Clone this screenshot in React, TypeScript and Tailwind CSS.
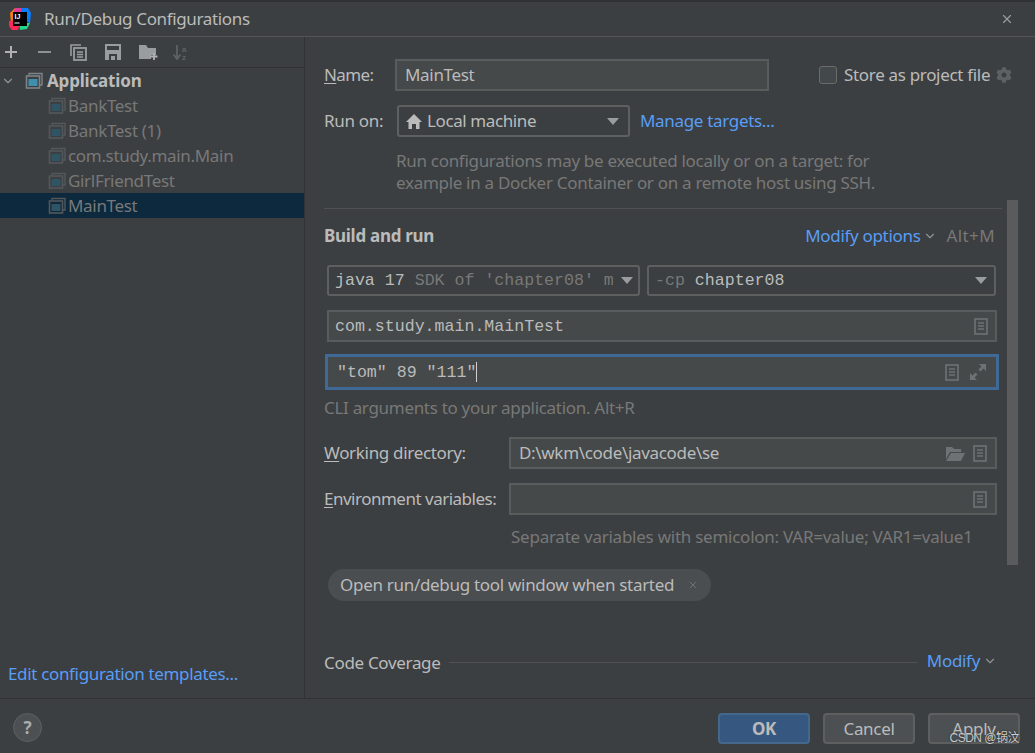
import { ChevronDown, X } from "lucide-react";
import { FaCog } from "react-icons/fa";

const sans = "font-['Noto_Sans','Open_Sans',sans-serif]";
const mono = "font-['Liberation_Mono','DejaVu_Sans_Mono',monospace]";

const configs = ["BankTest", "BankTest (1)", "com.study.main.Main", "GirlFriendTest", "MainTest"];

function AppIcon({ dim = false }: { dim?: boolean }) {
  const line = dim ? "#54585a" : "#7d8487";
  const fill = dim ? "#2f5564" : "#3f8fae";
  return (
    <svg width="18" height="18" viewBox="0 0 18 18" className="shrink-0">
      <path d="M4 3V1.500h13V13h-2" fill="none" stroke={line} strokeWidth="1.400" />
      <rect x="1.500" y="4" width="13" height="12" fill="none" stroke={line} strokeWidth="1.600" />
      <rect x="3.500" y="7" width="9" height="7" fill={fill} />
    </svg>
  );
}

function Logo() {
  return (
    <svg width="22" height="22" viewBox="0 0 22 22" className="shrink-0">
      <path d="M1 5 6 0h9l-3 11-10 4Z" fill="#f97a12" />
      <path d="M6 0h7l-2 6H4Z" fill="#e0399a" />
      <path d="M0 13 12 11 9 22H3L0 18Z" fill="#fe2857" />
      <path d="M12 0h7l3 5-1 10-9-4Z" fill="#087cfa" />
      <path d="M10 15h11l-3 6-7 1Z" fill="#21d789" />
      <rect x="4" y="4" width="14" height="14" fill="#000" />
      <text x="5.500" y="11" fill="#fff" fontSize="7" fontWeight="700" fontFamily="Liberation Sans">IJ</text>
      <rect x="5.500" y="14.500" width="5" height="1" fill="#fff" />
    </svg>
  );
}

function DocIcon() {
  return (
    <svg width="14" height="17" viewBox="0 0 14 17" className="shrink-0">
      <rect x="1" y="1" width="12" height="15" fill="none" stroke="#6e7274" strokeWidth="1.600" />
      <path d="M4 5h6M4 8h6M4 11h6" stroke="#6e7274" strokeWidth="1.400" />
    </svg>
  );
}

function Caret() {
  return (
    <svg width="12" height="7" viewBox="0 0 12 7" className="shrink-0">
      <path d="M0 0h12L6 7Z" fill="#9a9d9f" />
    </svg>
  );
}

function Toolbar() {
  return (
    <div className="h-[31px] flex items-center border-b border-[#323232]">
      <svg width="16" height="16" viewBox="0 0 16 16" className="ml-[3px]">
        <path d="M8 2v12M2 8h12" stroke="#afb1b3" strokeWidth="2" />
      </svg>
      <svg width="14" height="16" viewBox="0 0 14 16" className="ml-[19px]">
        <path d="M0 8h13" stroke="#8f9294" strokeWidth="2" />
      </svg>
      <svg width="17" height="17" viewBox="0 0 17 17" className="ml-[18px]">
        <path d="M1 12V1h10" fill="none" stroke="#9a9d9f" strokeWidth="1.600" />
        <rect x="4" y="4" width="12" height="12" fill="none" stroke="#9a9d9f" strokeWidth="1.800" />
        <path d="M7 8h6M7 10.500h6M7 13h6" stroke="#9a9d9f" strokeWidth="1.300" />
      </svg>
      <svg width="16" height="16" viewBox="0 0 16 16" className="ml-[18px]">
        <path d="M0 0h16v16H0Z" fill="#9a9d9f" />
        <rect x="2" y="2" width="12" height="4" fill="#3c3f41" />
        <rect x="4" y="10" width="8" height="6" fill="#3c3f41" />
        <rect x="6" y="12" width="4" height="4" fill="#9a9d9f" />
      </svg>
      <svg width="19" height="17" viewBox="0 0 19 17" className="ml-[18px]">
        <path d="M0 1h7l2 3h8v7h-5v4H0Z" fill="#9a9d9f" />
        <path d="M15 9v7M11.500 12.500h7" stroke="#afb1b3" strokeWidth="1.800" />
      </svg>
      <svg width="17" height="17" viewBox="0 0 17 17" className="ml-[14px]">
        <path d="M5 1v13M1.500 10.500 5 15l3.500-4.500" fill="none" stroke="#5e6163" strokeWidth="1.800" />
        <text x="10" y="7.500" fontSize="8" fontWeight="700" fill="#5e6163" fontFamily="Liberation Sans">a</text>
        <text x="10" y="16" fontSize="8" fontWeight="700" fill="#5e6163" fontFamily="Liberation Sans">z</text>
      </svg>
    </div>
  );
}

function Sidebar() {
  return (
    <div className="w-[305px] shrink-0 flex flex-col border-r border-[#323232]">
      <Toolbar />
      <div className="h-[25px] flex items-center">
        <ChevronDown size={14} className="ml-[1px] text-[#8f9294]" />
        <span className="ml-[10px]"><AppIcon /></span>
        <span className="ml-[4px] text-[17px] font-bold text-[#bbbbbb] tracking-[-0.18px]">Application</span>
      </div>
      {configs.map((name) => (
        <div key={name} className={`h-[25px] flex items-center pl-[48px] ${name === "MainTest" ? "bg-[#0d293e]" : ""}`}>
          <AppIcon dim />
          <span className="ml-[2px] text-[17px] text-[#787878] tracking-[-0.32px]">{name}</span>
        </div>
      ))}
      <div className="mt-auto pb-[13px] pl-[8px] text-[17px] text-[#589df6] tracking-[-0.34px] leading-[22px]">
        Edit configuration templates...
      </div>
    </div>
  );
}

function Label({ first, rest, width, spacing = "tracking-[-0.32px]" }: { first: string; rest: string; width: string; spacing?: string }) {
  return (
    <span className={`${width} shrink-0 text-[17px] text-[#bbbbbb] ${spacing}`}>
      <span className="underline underline-offset-2">{first}</span>
      {rest}
    </span>
  );
}

function Form() {
  return (
    <div className="flex-1 min-w-0 pl-[19px] pr-[33px] pt-[22px] flex flex-col relative">
      <div className="h-[32px] flex items-center">
        <Label first="N" rest="ame:" width="w-[71px]" spacing="tracking-[-0.6px]" />
        <div className="w-[374px] shrink-0 h-[32px] flex items-center px-[8px] bg-[#45494a] border-2 border-[#585c5d] text-[17px] text-[#bbbbbb] tracking-[-0.32px]">
          MainTest
        </div>
        <div className="ml-[50px] flex items-center shrink-0">
          <span className="w-[18px] h-[18px] rounded-[3px] border border-[#6b6b6b] bg-[#43494a]" />
          <span className="ml-[7px] text-[17px] text-[#bbbbbb] tracking-[-0.32px] whitespace-nowrap">Store as project file</span>
          <FaCog size={16} className="ml-[6px] text-[#5e6163]" />
        </div>
      </div>
      <div className="mt-[14px] h-[32px] flex items-center">
        <span className="w-[73px] shrink-0 text-[17px] text-[#bbbbbb] tracking-[-0.32px]">Run on:</span>
        <div className="w-[233px] shrink-0 h-[32px] flex items-center pl-[7px] pr-[9px] rounded-[3px] border-2 border-[#5e6060] text-[#bbbbbb]">
          <svg width="16" height="15" viewBox="0 0 16 15" className="shrink-0">
            <path d="M8 0 16 8h-2.500v7H10v-5H6v5H2.500V8H0Z" fill="#bbbbbb" />
          </svg>
          <span className="ml-[5px] text-[17px] tracking-[-0.4px]">Local machine</span>
          <span className="ml-auto"><Caret /></span>
        </div>
        <span className="ml-[10px] text-[17px] text-[#589df6] tracking-[-0.32px] whitespace-nowrap">Manage targets...</span>
      </div>
      <p className="mt-[13px] ml-[72px] text-[17px] leading-[22px] text-[#787878] tracking-[-0.3px] whitespace-nowrap">
        Run configurations may be executed locally or on a target: for
        <br />
        example in a Docker Container or on a remote host using SSH.
      </p>
      <div className="mt-[14px] h-px bg-[#515151]" />
      <div className="mt-[15px] mr-[7px] h-[24px] flex items-center">
        <span className="text-[17px] font-bold text-[#bbbbbb] tracking-[-0.28px]">Build and run</span>
        <span className="ml-auto text-[17px] text-[#589df6] tracking-[-0.32px]">Modify options</span>
        <ChevronDown size={14} className="ml-[3px] text-[#8f9294]" />
        <span className="ml-[9px] text-[17px] text-[#787878] tracking-[0.4px]">Alt+M</span>
      </div>
      <div className={`mt-[17px] ml-[3px] mr-[6px] h-[31px] flex gap-[7px] ${mono} text-[16.600px]`}>
        <div className="w-[313px] flex items-center pl-[6px] pr-[5px] rounded-[3px] border-2 border-[#5e6060] overflow-hidden">
          <span className="text-[#bbbbbb] whitespace-pre pt-[2px]">java 17 </span>
          <span className="text-[#787878] whitespace-pre w-[198px] overflow-hidden pt-[2px]">SDK of 'chapter08' m</span>
          <span className="ml-auto"><Caret /></span>
        </div>
        <div className="flex-1 flex items-center pl-[6px] pr-[7px] rounded-[3px] border-2 border-[#5e6060]">
          <span className="text-[#787878] whitespace-pre pt-[2px]">-cp </span>
          <span className="text-[#bbbbbb] pt-[2px]">chapter08</span>
          <span className="ml-auto"><Caret /></span>
        </div>
      </div>
      <div className={`mt-[14px] ml-[3px] mr-[5px] h-[32px] flex items-center pl-[6px] pr-[7px] bg-[#45494a] border-2 border-[#585c5d] ${mono} text-[16.600px] text-[#bbbbbb]`}>
        <span className="pt-[2px]">com.study.main.MainTest</span>
        <span className="ml-auto"><DocIcon /></span>
      </div>
      <div className={`mt-[12px] ml-px mr-[3px] h-[36px] flex items-center pl-[9px] pr-[9px] bg-[#45494a] border-[3px] border-[#3f6a96] ${mono} text-[16.600px] text-[#bbbbbb]`}>
        <span className="pt-[2px]">"tom" 89 "111"</span>
        <span className="w-px h-[20px] bg-[#d0d0d0]" />
        <span className="ml-auto"><DocIcon /></span>
        <svg width="18" height="18" viewBox="0 0 18 18" className="ml-[10px] shrink-0">
          <path d="M10 1h7v7l-2.500-2.500-3 3-2-2 3-3ZM8 17H1v-7l2.500 2.500 3-3 2 2-3 3Z" fill="#6e7274" />
        </svg>
      </div>
      <p className="mt-[7px] text-[17px] leading-[22px] text-[#787878] tracking-[-0.3px]">CLI arguments to your application. Alt+R</p>
      <div className="mt-[18px] h-[32px] flex items-center">
        <Label first="W" rest="orking directory:" width="w-[185px]" />
        <div className="w-[488px] shrink-0 h-[32px] flex items-center pl-[8px] pr-[8px] bg-[#45494a] border-2 border-[#585c5d] text-[17px] text-[#bbbbbb] tracking-[-0.32px]">
          D:\wkm\code\javacode\se
          <svg width="19" height="15" viewBox="0 0 19 15" className="ml-auto shrink-0">
            <path d="M0 1h6l2 2h7v3H4L0 13Z M5 7h14l-4 8H0Z" fill="#6e7274" />
          </svg>
          <span className="ml-[8px]"><DocIcon /></span>
        </div>
      </div>
      <div className="mt-[14px] h-[32px] flex items-center">
        <Label first="E" rest="nvironment variables:" width="w-[185px]" spacing="tracking-[-0.5px]" />
        <div className="w-[488px] shrink-0 h-[32px] flex items-center pl-[8px] pr-[8px] bg-[#45494a] border-2 border-[#585c5d]">
          <span className="ml-auto"><DocIcon /></span>
        </div>
      </div>
      <p className="mt-[11px] ml-[187px] text-[17px] leading-[22px] text-[#787878] tracking-[-0.25px] whitespace-nowrap">
        Separate variables with semicolon: VAR=value; VAR1=value1
      </p>
      <div className="mt-[21px] ml-[4px] w-[383px] h-[32px] rounded-full bg-[#4a4e50] flex items-center pl-[12px] text-[17px] text-[#bbbbbb] tracking-[-0.3px] whitespace-nowrap">
        Open run/debug tool window when started
        <X size={12} className="ml-[13px] text-[#6e7274]" />
      </div>
      <div className="mt-[50px] mr-[5px] h-[24px] flex items-center">
        <span className="text-[17px] text-[#bbbbbb] tracking-[-0.32px]">Code Coverage</span>
        <span className="ml-[8px] flex-1 h-px bg-[#515151] mb-[2px]" />
        <span className="ml-[9px] mb-[4px] text-[17px] text-[#589df6] tracking-[-0.32px]">Modify</span>
        <ChevronDown size={14} className="ml-[3px] mb-[4px] text-[#8f9294]" />
      </div>
      <div className="absolute left-[702px] top-[163px] w-[11px] h-[365px] bg-[#595b5d]" />
    </div>
  );
}

function Footer() {
  const btn = "w-[92px] h-[31px] rounded-[4px] flex items-center justify-center text-[17px] tracking-[-0.3px]";
  return (
    <div className="h-[55px] shrink-0 border-t border-[#323232] flex items-start pt-[14px] pl-[13px] pr-[15px] relative">
      <span className="w-[29px] h-[29px] rounded-full bg-[#4c5052] border border-[#5e6060] flex items-center justify-center text-[17px] font-bold text-[#a9acae]">?</span>
      <div className="ml-auto flex gap-[13px]">
        <span className={`${btn} bg-[#365880] border-2 border-[#43688c] font-bold text-[#bbbbbb]`}>OK</span>
        <span className={`${btn} bg-[#4c5052] border-2 border-[#5e6060] text-[#bbbbbb]`}>Cancel</span>
        <span className={`${btn} bg-[#4c5052] border-2 border-[#5e6060] text-[#bbbbbb]`}>Apply</span>
      </div>
      <span className="absolute right-[16px] top-[29px] text-[12px] leading-[20px] tracking-[-0.5px] text-[#c8c8c8] font-['Liberation_Sans','Noto_Sans_CJK_SC',sans-serif] [text-shadow:0_0_2px_#222]">CSDN @锅汶</span>
    </div>
  );
}

export default function App() {
  return (
    <div className={`w-[1035px] h-[753px] overflow-hidden flex flex-col bg-[#3c3f41] ${sans}`}>
      <div className="h-[37px] shrink-0 flex items-center border-t-2 border-b border-t-[#2f3133] border-b-[#555555] pl-[9px] pr-[21px]">
        <Logo />
        <span className="ml-[13px] text-[17px] text-[#bbbbbb] tracking-[-0.35px]">Run/Debug Configurations</span>
        <X size={14} className="ml-auto text-[#9a9d9f]" />
      </div>
      <div className="flex-1 min-h-0 flex">
        <Sidebar />
        <Form />
      </div>
      <Footer />
    </div>
  );
}
